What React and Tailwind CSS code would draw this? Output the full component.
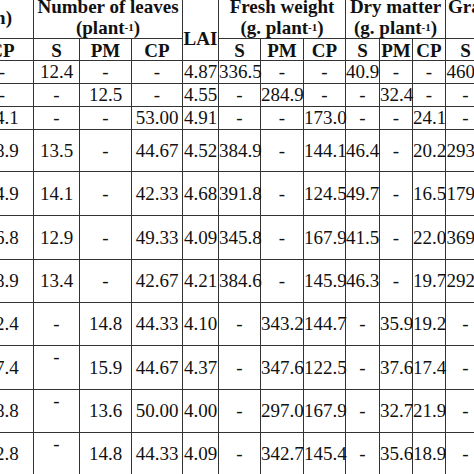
const cols = [
  'w-[63px]', 'w-[46px]', 'w-[52px]', 'w-[51px]', 'w-[36px]', 'w-[42px]',
  'w-[43px]', 'w-[42px]', 'w-[34px]', 'w-[33px]', 'w-[33px]', 'w-[40px]',
]

const rows = [
  { h: 'h-[23px]', v: ['-', '12.4', '-', '-', '4.87', '336.5', '-', '-', '40.9', '-', '-', '4600'] },
  { h: 'h-[23px]', v: ['-', '-', '12.5', '-', '4.55', '-', '284.9', '-', '-', '32.4', '-', '-'] },
  { h: 'h-[22px]', v: ['24.1', '-', '-', '53.00', '4.91', '-', '-', '173.0', '-', '-', '24.1', '-'] },
  { h: 'h-[42px]', v: ['38.9', '13.5', '-', '44.67', '4.52', '384.9', '-', '144.1', '46.4', '-', '20.2', '2930'] },
  { h: 'h-[44px]', v: ['34.9', '14.1', '-', '42.33', '4.68', '391.8', '-', '124.5', '49.7', '-', '16.5', '1790'] },
  { h: 'h-[44px]', v: ['36.8', '12.9', '-', '49.33', '4.09', '345.8', '-', '167.9', '41.5', '-', '22.0', '3690'] },
  { h: 'h-[43px]', v: ['38.9', '13.4', '-', '42.67', '4.21', '384.6', '-', '145.9', '46.3', '-', '19.7', '2920'] },
  { h: 'h-[43px]', v: ['32.4', '-', '14.8', '44.33', '4.10', '-', '343.2', '144.7', '-', '35.9', '19.2', '-'] },
  { h: 'h-[44px]', top: true, v: ['37.4', '-', '15.9', '44.67', '4.37', '-', '347.6', '122.5', '-', '37.6', '17.4', '-'] },
  { h: 'h-[43px]', top: true, v: ['38.8', '-', '13.6', '50.00', '4.00', '-', '297.0', '167.9', '-', '32.7', '21.9', '-'] },
  { h: 'h-[43px]', top: true, v: ['32.8', '-', '14.8', '44.33', '4.09', '-', '342.7', '145.4', '-', '35.6', '18.9', '-'] },
]

const cell = 'border-[1.5px] border-[#333] p-0 text-center whitespace-nowrap'

function Sup() {
  return <sup className="text-[11px] leading-none relative -top-[3px]">-1</sup>
}

export default function App() {
  return (
    <div className="w-[474px] h-[474px] overflow-hidden bg-white">
      <table
        className="table-fixed border-collapse w-[515px] -ml-[30px] -mt-[10px] text-[19px] text-[#111]"
        style={{ fontFamily: '"Liberation Serif", "Times New Roman", serif' }}
      >
        <colgroup>
          {cols.map((c, i) => (
            <col key={i} className={c} />
          ))}
        </colgroup>
        <thead className="font-bold">
          <tr className="h-[48px]">
            <th className={`${cell} align-bottom leading-[18px] pb-[11px] !text-right pr-[21px]`}>(cm)</th>
            <th colSpan={3} className={`${cell} align-bottom leading-[21px]`}>
              Number of leaves
              <br />
              (plant<Sup />)
            </th>
            <th rowSpan={2} className={`${cell} align-bottom leading-[18px] pb-[12px]`}>LAI</th>
            <th colSpan={3} className={`${cell} align-bottom leading-[21px]`}>
              Fresh weight
              <br />
              (g. plant<Sup />)
            </th>
            <th colSpan={3} className={`${cell} align-bottom leading-[21px]`}>
              Dry matter
              <br />
              (g. plant<Sup />)
            </th>
            <th className={`${cell} align-bottom leading-[21px] !text-left pl-[2px]`}>
              Grain yield
              <br />
              &nbsp;
            </th>
          </tr>
          <tr className="h-[22px]">
            {['CP', 'S', 'PM', 'CP', 'S', 'PM', 'CP', 'S', 'PM', 'CP', 'S'].map((s, i) => (
              <th key={i} className={`${cell} align-bottom leading-[18px]`}>
                {s}
              </th>
            ))}
          </tr>
        </thead>
        <tbody>
          {rows.map((r, i) => (
            <tr key={i} className={r.h}>
              {r.v.map((v, j) => (
                <td
                  key={j}
                  className={`${cell} leading-[22px] ${r.top && j === 1 ? 'align-top' : 'align-middle'}`}
                >
                  {v}
                </td>
              ))}
            </tr>
          ))}
        </tbody>
      </table>
    </div>
  )
}
